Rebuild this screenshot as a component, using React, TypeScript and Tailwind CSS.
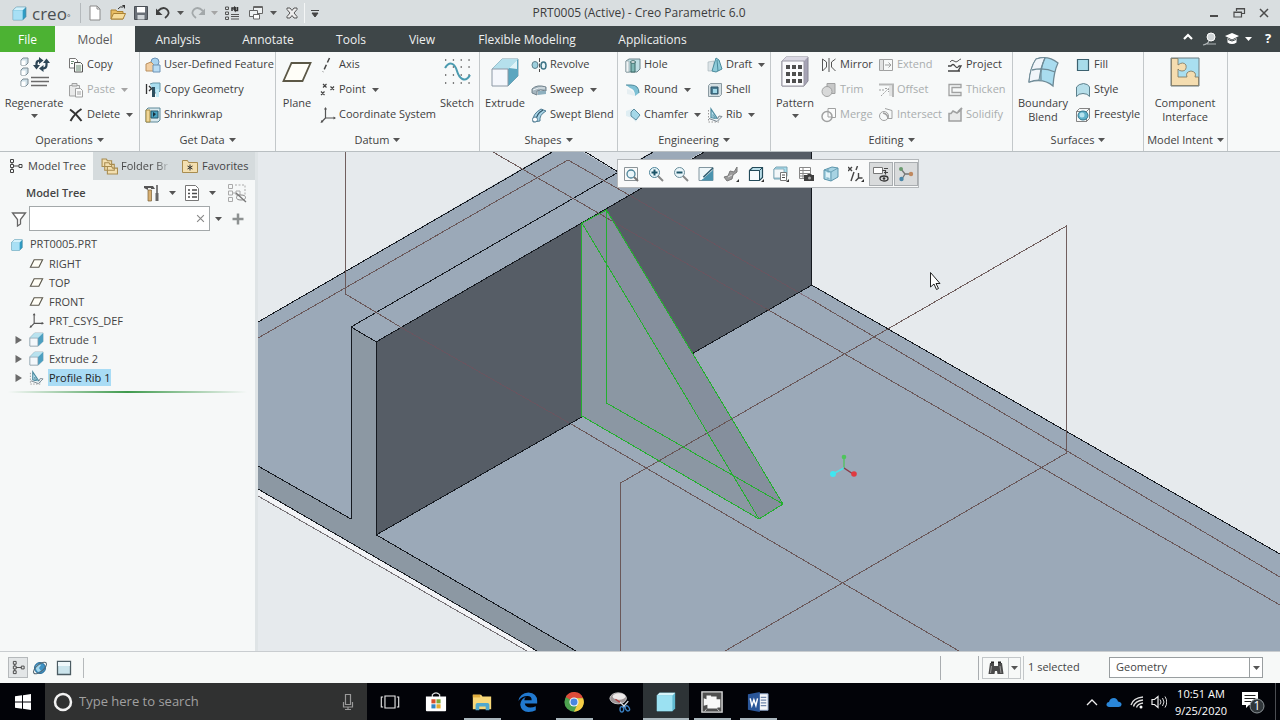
import React from 'react';
import type { ReactNode } from 'react';
import clsx from 'clsx';

type IconProps = { box?: string; className?: string; children: ReactNode };

function Icon({ box = '0 0 16 16', className = 'h-4 w-4', children }: IconProps) {
  return (
    <svg viewBox={box} className={clsx('shrink-0', className)} fill="none" stroke="#4b4b4b" strokeWidth="1" aria-hidden="true">
      {children}
    </svg>
  );
}

function Caret({ muted = false, className = '' }: { muted?: boolean; className?: string }) {
  return (
    <svg viewBox="0 0 7 4" className={clsx('h-1 w-[7px] shrink-0', className)} aria-hidden="true">
      <path d="M0 0h7L3.500 4z" fill={muted ? '#a5a5a5' : '#555'} />
    </svg>
  );
}

/* ---------- shared glyphs ---------- */

const Cube = () => (
  <>
    <path d="M2 5l3-3h9v9l-3 3H2z" fill="#2f9cc4" stroke="#3b7f9b" strokeWidth=".7" />
    <path d="M2 5h9v9H2z" fill="#a8e0f5" stroke="none" />
    <path d="M2 5l3-3h9l-3 3z" fill="#d3f1fb" stroke="none" />
  </>
);

const ExtrudeGlyph = () => (
  <>
    <path d="M1 6l5-5h9v9l-5 5H1z" fill="#7fc4dc" stroke="#7b98a6" strokeWidth=".6" />
    <path d="M9.500 6.500L15 1v9l-5.500 5z" fill="#4d9fc0" stroke="none" />
    <path d="M6 1h9L9.500 6.500H1z" fill="#b9e2ee" stroke="none" />
    <path d="M1 6.500h8.500V15H1z" fill="#f4f8fb" stroke="#8d9ba6" strokeWidth=".7" />
  </>
);

const PlaneGlyph = () => <path d="M5.500 4h9L10.500 12h-9z" stroke="#5b574b" strokeWidth="1.200" fill="#fffef6" />;

const CsysGlyph = () => (
  <>
    <path d="M5.500 1v10H15M5.500 11l-4 4" stroke="#555" strokeWidth="1.200" />
    <path d="M5.500 0l1.500 2.500H4zM16 11l-2.500 1.500v-3zM.5 16l1-3 2 2z" fill="#555" stroke="none" />
  </>
);

const RibGlyph = () => (
  <>
    <path d="M1.500 3v12h11" stroke="#999" strokeDasharray="1.500 1.500" />
    <path d="M4 2v8.500l7 2z" fill="#bfe6f2" stroke="#4b8a9f" strokeWidth="1.200" />
    <path d="M6 7.500v2.500l2.500.7z" fill="#fff" stroke="#4b8a9f" strokeWidth=".8" />
    <path d="M2 11.500l8 3 5-5-3-.5-1.500 3" stroke="#7b8790" fill="#eef4f6" />
  </>
);

const TreeGlyph = () => (
  <path d="M2.500 1.500h3v3h-3zM2.500 6.500h3v3h-3zM2.500 11.500h3v3h-3zM11 6.500h3v3h-3zM4 4.500v2M4 9.500v2M5.500 8H11" stroke="#444" />
);

/* ---------- title bar ---------- */

function TitleBar() {
  return (
    <header className="flex h-[26px] shrink-0 items-center bg-[#d9dee0] text-[#3c3c3c]">
      <div className="flex h-full flex-1 items-center">
        <Icon className="ml-[11px] h-[17px] w-[17px]">
          <Cube />
        </Icon>
        <span className="ml-1 w-[48px] text-[17px] leading-none text-[#4a4f52]">creo<span className="text-[8px]">°</span></span>
        <span className="h-5 w-px bg-[#b4b9bc]" />
        <button type="button" aria-label="New" className="ml-[6px]">
          <Icon><path d="M3 1h7l3 3v11H3z" fill="#fff" stroke="#8a8a8a" /><path d="M10 1v3h3" stroke="#8a8a8a" /></Icon>
        </button>
        <button type="button" aria-label="Open" className="ml-[7px]">
          <Icon>
            <path d="M1 14V5h5l1 1.500h6V14z" fill="#e8bd63" stroke="#a98135" />
            <path d="M1 14l2.500-5.500h12L13 14z" fill="#f6dc9a" stroke="#a98135" />
            <path d="M8 4q2-3 5-2" stroke="#333" /><path d="M12 0l3 0v4z" fill="#333" stroke="none" />
          </Icon>
        </button>
        <button type="button" aria-label="Save" className="ml-[7px]">
          <Icon>
            <path d="M1.500 1.500h13v13h-13z" fill="#6a7078" stroke="#4a4f55" />
            <path d="M4 2h8v5.500H4z" fill="#fff" stroke="none" /><path d="M4.500 10h7v4.500h-7z" fill="#cfd4d8" stroke="none" />
          </Icon>
        </button>
        <button type="button" aria-label="Undo" className="ml-[6px]">
          <Icon><path d="M3 6q5-5 9-1.500q4 4-2 8.500" stroke="#3f3f3f" strokeWidth="1.800" /><path d="M1 3.500v6.500h6.500z" fill="#3f3f3f" stroke="none" /></Icon>
        </button>
        <Caret className="ml-[6px]" />
        <button type="button" aria-label="Redo" className="ml-[6px]">
          <Icon><path d="M13 6q-5-5-9-1.500q-4 4 2 8.500" stroke="#a3a8aa" strokeWidth="1.800" /><path d="M15 3.500v6.500H8.500z" fill="#a3a8aa" stroke="none" /></Icon>
        </button>
        <Caret muted className="ml-[5px]" />
        <button type="button" aria-label="Regenerate model" className="ml-[6px]">
          <Icon>
            <path d="M1.500 2h3v2.500h-3zM1.500 7h3v2.500h-3zM1.500 12h3v2.500h-3zM7 9.500h8M7 11.500h8M7 14h8" stroke="#555" />
            <path d="M8 6V3h2.500M13.500 2v3.500H11" stroke="#333" strokeWidth="1.500" /><path d="M10 1v4l3-2zM12 4h-3l2.500 3.500z" fill="#333" stroke="none" />
          </Icon>
        </button>
        <button type="button" aria-label="Windows" className="ml-[8px]">
          <Icon>
            <path d="M5.500 1.500h9v7h-9z" fill="#eef1f2" stroke="#666" /><path d="M1.500 5.500h8v6h-8z" fill="#eef1f2" stroke="#666" />
            <path d="M5.500 9.500h6v4.500h-6z" fill="#fff" stroke="#666" /><path d="M5.500 2.500h9" stroke="#666" />
          </Icon>
        </button>
        <Caret className="ml-[6px]" />
        <button type="button" aria-label="Close window" className="ml-[7px]">
          <Icon><path d="M3 3h3l2 2.500L10 3h3v1.500L10 8l3 3.500V13h-3l-2-2.500L6 13H3v-1.500L6 8 3 4.500z" fill="#eee" stroke="#555" /></Icon>
        </button>
        <span className="ml-1 h-5 w-px bg-[#f4f6f6]" />
        <svg viewBox="0 0 8 7" className="ml-[6px] h-[7px] w-2" aria-hidden="true"><path d="M0 .5h8M1 3h6l-3 4z" fill="#444" stroke="#444" /></svg>
      </div>
      <h1 className="pl-[6px] text-[12px]">PRT0005 (Active) - Creo Parametric 6.0</h1>
      <div className="flex flex-1 items-center justify-end gap-[9px] pr-2">
        <button type="button" aria-label="Minimize"><Icon><path d="M4 11h8" strokeWidth="2" /></Icon></button>
        <button type="button" aria-label="Restore"><Icon><path d="M5.500 6V3.500h8v5H11M5.500 4h8" strokeWidth="1.200" /><path d="M3 7h7.500v5H3zM3 7.500h7.500" strokeWidth="1.200" /></Icon></button>
        <button type="button" aria-label="Close"><Icon><path d="M4 4l8 8M12 4l-8 8" strokeWidth="1.500" /></Icon></button>
      </div>
    </header>
  );
}

/* ---------- ribbon tabs ---------- */

const tabs = [
  { label: 'Analysis', width: 'w-[86px]' },
  { label: 'Annotate', width: 'w-[94px]' },
  { label: 'Tools', width: 'w-[72px]' },
  { label: 'View', width: 'w-[70px]' },
  { label: 'Flexible Modeling', width: 'w-[140px]' },
  { label: 'Applications', width: 'w-[111px]' },
];

function TabBar() {
  return (
    <nav className="flex h-[26px] shrink-0 items-stretch bg-[#3e4648] text-[12px] text-[#eef0f0]">
      <button type="button" className="w-[55px] shrink-0 bg-[#4cb233] pt-[2px] text-white">File</button>
      <button type="button" className="w-20 shrink-0 bg-[#f7f9f8] pt-[2px] text-[#5a5a5a]">Model</button>
      {tabs.map((tab) => (
        <button key={tab.label} type="button" className={clsx('shrink-0 pt-[2px] whitespace-nowrap', tab.width)}>{tab.label}</button>
      ))}
      <div className="flex flex-1 items-center justify-end gap-[6px] pr-[2px]">
        <button type="button" aria-label="Collapse ribbon"><Icon><path d="M4 8l4-4 4 4" stroke="#fff" strokeWidth="2.200" /></Icon></button>
        <button type="button" aria-label="Search">
          <Icon><circle cx="9" cy="6" r="4" fill="#cfd4d6" stroke="#fff" /><path d="M1 14q5-1 6-4M5 13h9" stroke="#aeb4b6" strokeWidth="1.200" /></Icon>
        </button>
        <button type="button" aria-label="Learning" className="flex items-center gap-[5px]">
          <Icon><path d="M8 2l7 3-7 3.500L1 5z" fill="#fff" stroke="none" /><path d="M3.500 7v4.500q4.500 3 9 0V7L8 9.500z" fill="#fff" stroke="none" /><path d="M4 8.500q4 3 8 0" stroke="#3e4648" /></Icon>
          <svg viewBox="0 0 7 4" className="h-1 w-[7px]" aria-hidden="true"><path d="M0 0h7L3.500 4z" fill="#fff" /></svg>
        </button>
        <button type="button" aria-label="Help" className="w-5 text-[13px] font-bold text-white">?</button>
      </div>
    </nav>
  );
}

/* ---------- ribbon ---------- */

type CommandProps = { label: string; icon: ReactNode; menu?: boolean; disabled?: boolean };

function Command({ label, icon, menu, disabled }: CommandProps) {
  return (
    <button type="button" disabled={disabled} className={clsx('flex h-[25px] items-center gap-[3px] whitespace-nowrap', disabled && 'text-[#a9adae]')}>
      <Icon className={clsx('h-4 w-4', disabled && 'opacity-50 grayscale')}>{icon}</Icon>
      <span>{label}</span>
      {menu && <Caret muted={disabled} className="ml-[3px]" />}
    </button>
  );
}

function BigCommand({ lines, icon, menu, width }: { lines: string[]; icon: ReactNode; menu?: boolean; width: string }) {
  return (
    <button type="button" className={clsx('flex h-[75px] shrink-0 flex-col items-center pt-1 leading-[14px]', width)}>
      <Icon box="0 0 32 32" className="h-8 w-8">{icon}</Icon>
      <span className="flex flex-col pt-2 whitespace-nowrap">
        {lines.map((line) => <span key={line}>{line}</span>)}
      </span>
      {menu && <Caret className="mt-1" />}
    </button>
  );
}

function Group({ title, width, children }: { title: string; width: string; children: ReactNode }) {
  return (
    <section className={clsx('flex shrink-0 flex-col border-r border-[#c3c8ca]', width)}>
      <div className="flex h-[75px]">{children}</div>
      <button type="button" className="flex h-[23px] items-center justify-center gap-1 pt-[3px]">
        {title}
        <Caret />
      </button>
    </section>
  );
}

function Ribbon() {
  return (
    <div className="flex h-[100px] shrink-0 overflow-hidden border-b border-[#b9bfc2] bg-[#f7f9f9] text-[11px] text-[#3f3f3f]">
      <Group title="Operations" width="w-[140px]">
        <BigCommand
          lines={['Regenerate']}
          menu
          width="w-[68px]"
          icon={
            <>
              <path d="M3 4l2-2h5v5l-2 2H3zM3 14l2-2h5v5l-2 2H3zM3 25l2-2h5v5l-2 2H3z" fill="#cfe0e8" stroke="#7c8b93" />
              <path d="M3.500 4.500h4V9h-4zM3.500 14.500h4V19h-4zM3.500 25.500h4V30h-4z" fill="#fff" stroke="none" />
              <path d="M13 21.500h18M13 25.500h18M13 29.500h16" stroke="#6b6b6b" strokeWidth="1.300" />
              <path d="M18.500 10V7.500q0-3 3.500-3M28.500 6v3q0 3.500-4 3.500" stroke="#2d4656" strokeWidth="2.200" />
              <path d="M21 1v7l4.500-3.500zM25.500 9v7L21 12.500zM15 9h7l-3.500 4.500zM25 7h7l-3.500-4.500z" fill="#2d4656" stroke="none" />
            </>
          }
        />
        <div>
          <Command label="Copy" icon={<><path d="M1.500 1.500h6l2 2V11h-8z" fill="#fff" stroke="#777" /><path d="M6.500 5.500h6l2 2V15h-8z" fill="#f4f8f4" stroke="#555" /><path d="M3 4.500h3M3 6.500h2M8 9h5M8 11h5M8 13h5" stroke="#6b8b74" /></>} />
          <Command label="Paste" menu disabled icon={<><path d="M1.500 3.500h10V14h-10z" fill="#ddd" /><path d="M4 1.500h5V4H4z" fill="#ccc" /><path d="M7.500 6.500h5l2 2V15h-7z" fill="#fff" /><path d="M9 10h4M9 12h4" /></>} />
          <Command label="Delete" menu icon={<path d="M2 2.500q6 4 11.500 11.500M13.500 2Q7 6 2.500 14" stroke="#333" strokeWidth="2" />} />
        </div>
      </Group>

      <Group title="Get Data" width="w-[136px]">
        <div className="pl-[5px]">
          <Command label="User-Defined Feature" icon={<><circle cx="10" cy="5" r="4" fill="#a9d3ee" stroke="#6c93b5" /><path d="M1 7l5-2 3 3v6H1z" fill="#f2cfa3" stroke="#b98f5e" /><path d="M8 8h7v7H8z" fill="#b9dcf3" stroke="#6c93b5" /></>} />
          <Command label="Copy Geometry" icon={<><path d="M1.500 2v10M4 4l5 5M9 4L4 9" stroke="#333" strokeWidth="1.300" /><path d="M5 2l3-1h7v8l-2 2H9" fill="#a9def0" stroke="#6797a8" /><path d="M7 5h3v10H7z" fill="#2d4f5f" stroke="none" /><path d="M11 7h3v8h-3z" fill="#bfe9f5" stroke="none" /></>} />
          <Command label="Shrinkwrap" icon={<><path d="M1 3l2-2h12v12l-2 2H1z" fill="#d9e9ee" stroke="#5c8898" /><path d="M1 3h4v12H1z" fill="#f0d796" stroke="#a58a45" /><path d="M6 4h7v7H6z" fill="#4aa3c2" stroke="#24566b" /><path d="M8 5l3 2-3 3z" fill="#18303c" stroke="none" /></>} />
        </div>
      </Group>

      <Group title="Datum" width="w-[204px]">
        <BigCommand lines={['Plane']} width="w-[42px]" icon={<path d="M10.500 7h19l-8 18h-19z" fill="#fffef8" stroke="#5c5846" strokeWidth="1.800" />} />
        <div className="w-[118px] pl-[2px]">
          <Command label="Axis" icon={<path d="M9.500 1L3 15" stroke="#444" strokeWidth="1.500" strokeDasharray="5 2.500" />} />
          <Command label="Point" menu icon={<path d="M3 2l3.500 3.500M6.500 2L3 5.500M10.500 4.500L14 8M14 4.500L10.500 8M1 9.500L4.500 13M4.500 9.500L1 13" stroke="#444" strokeWidth="1.200" />} />
          <Command label="Coordinate System" icon={<CsysGlyph />} />
        </div>
        <BigCommand
          lines={['Sketch']}
          width="w-[42px]"
          icon={
            <>
              <path d="M4 4h25M4 11h25M4 19h25M4 27h25" stroke="#555" strokeWidth="1.300" strokeDasharray="1.300 6.500" />
              <path d="M4 12C9 4 14 8 16 15S24 28 29 19" stroke="#4a9bb0" strokeWidth="2" />
            </>
          }
        />
      </Group>

      <Group title="Shapes" width="w-[138px]">
        <BigCommand
          lines={['Extrude']}
          width="w-[50px]"
          icon={
            <>
              <path d="M3 13L13 3h16v17L19 30V13z" fill="#8accdf" stroke="#7fa0ad" />
              <path d="M19 13L29 3v17L19 30z" fill="#5ca6bf" stroke="none" />
              <path d="M13 3h16L19 13H3z" fill="#b5e0ec" stroke="none" />
              <path d="M20 12l8-8v9z" fill="#dff3f8" stroke="none" />
              <path d="M3 13h16v17H3z" fill="#f5f7fc" stroke="#8c98a5" />
            </>
          }
        />
        <div className="pl-px">
          <Command label="Revolve" icon={<><path d="M8.500 1v14" strokeDasharray="4 1.500" /><ellipse cx="4" cy="8" rx="3" ry="3.500" fill="#9ed0de" stroke="#5d808c" /><ellipse cx="12.500" cy="8.500" rx="2.500" ry="3.500" fill="#e8f4f7" stroke="#3d7486" strokeWidth="1.500" /></>} />
          <Command label="Sweep" menu icon={<><path d="M1 7q5-5 14-2v4Q9 7 6 9v4l-5-2z" fill="#a6b6bf" stroke="#71828c" /><path d="M2 8q5-3 12-2" stroke="#eef4f6" /><path d="M7 9h8v3l-8 1z" fill="#8eb0bf" stroke="none" /></>} />
          <Command label="Swept Blend" icon={<><path d="M2 15q-1-8 8-13l5 2q-7 4-6 10z" fill="#a8d4e6" stroke="#4f7c93" /><path d="M5 14q0-7 7-11" stroke="#2e556a" strokeWidth="1.300" /><ellipse cx="4" cy="12.500" rx="2.500" ry="2.500" fill="#fff" stroke="#4f7c93" /></>} />
        </div>
      </Group>

      <Group title="Engineering" width="w-[153px]">
        <div className="w-[82px] pl-[7px]">
          <Command label="Hole" icon={<><path d="M1 4l3-2h11v10l-3 3H1z" fill="#bfdfe4" stroke="#6d858c" /><path d="M1 4h3v11H1z" fill="#eff4f5" stroke="#8ca0a6" strokeWidth=".7" /><path d="M6 15V5h4v10z" fill="#7fb7b5" stroke="#3c6a69" /><ellipse cx="8" cy="5" rx="2.500" ry="1.300" fill="#fff" stroke="#3c6a69" /></>} />
          <Command label="Round" menu icon={<><path d="M1 3h5q8 0 8 8l-4 3Q10 7 5 6z" fill="#7fc1d5" stroke="none" /><path d="M1 3h5q8 0 8 8" stroke="#4f8b9d" /><path d="M2 7q7 1 8 7l-8-2z" fill="#e6eff2" stroke="none" /></>} />
          <Command label="Chamfer" menu icon={<><path d="M1 4l6-2 7 6-3 7-4-4-6-2z" fill="#dfeef3" stroke="none" /><path d="M6 5l3-3 6 6-4 5-5-4z" fill="#a5d8e8" stroke="#5c8da0" /></>} />
        </div>
        <div className="pl-[7px]">
          <Command label="Draft" menu icon={<><path d="M1 5l6-1v10H1z" fill="#dce4e7" stroke="#a3b0b5" strokeWidth=".6" /><path d="M5 14L9 1l3 2 3 9-6 3z" fill="#8fcbd9" stroke="#4b8b9c" /><path d="M10 3l1 11" stroke="#4b8b9c" /></>} />
          <Command label="Shell" icon={<><path d="M1.500 3.500l2-2h11v11l-2 2h-11z" fill="#d4dfe3" stroke="#8b9aa1" /><path d="M4 5h7v7H4z" fill="#4a7c92" stroke="#2f5568" /><path d="M6 7h4v4H6z" fill="#a1d8e8" stroke="none" /></>} />
          <Command label="Rib" menu icon={<RibGlyph />} />
        </div>
      </Group>

      <Group title="Editing" width="w-[242px]">
        <BigCommand
          lines={['Pattern']}
          menu
          width="w-[48px]"
          icon={
            <>
              <path d="M3 5l4-4h22v24l-4 5H3z" fill="#a6a3b5" stroke="#8a8896" />
              <path d="M3 5l4-4h22l-4 4z" fill="#d9d7e2" stroke="none" />
              <path d="M3 5h22v25H3z" fill="#fbfbfd" stroke="#9b9aa5" />
              <path d="M7 9h4v4H7zM13 9h4v4h-4zM19 9h4v4h-4zM7 16h4v4H7zM13 16h4v4h-4zM19 16h4v4h-4zM7 23h4v4H7zM13 23h4v4h-4zM19 23h4v4h-4z" fill="#4f4f4f" stroke="none" />
            </>
          }
        />
        <div className="w-[59px] pl-[2px]">
          <Command label="Mirror" icon={<path d="M1.500 2l4 3v5l-4 4zM8 1v14M14.500 2l-4 3v5l4 4" stroke="#555" />} />
          <Command label="Trim" disabled icon={<><path d="M6 1.500h8v10H6z" fill="#999" /><circle cx="6" cy="9.500" r="5" fill="#bbb" /></>} />
          <Command label="Merge" disabled icon={<><path d="M7 1.500h7.500v9H7z" fill="#fff" /><circle cx="6" cy="9.500" r="5" fill="#fff" strokeWidth="1.500" /><path d="M7 5v5h4" /></>} />
        </div>
        <div className="w-[69px]">
          <Command label="Extend" disabled icon={<><path d="M1.500 2.500h4v11h-4z" fill="#ccc" /><path d="M5.500 2.500h9v11h-9zM7 8h6M10.500 5.500L13 8l-2.500 2.500" /></>} />
          <Command label="Offset" disabled icon={<><path d="M1 2.500h14V15" strokeWidth="2" stroke="#777" /><path d="M1 8h6M3 14l7-7M7 6.500h3.500V10" strokeDasharray="2 1" /><path d="M11 4h3v10h-3z" fill="#ccc" stroke="none" /></>} />
          <Command label="Intersect" disabled icon={<><path d="M7 1.500l7 2v8h-5" /><circle cx="6" cy="9" r="4.500" /><path d="M5 6q5 1 5 6" strokeWidth="1.600" /></>} />
        </div>
        <div>
          <Command label="Project" icon={<><path d="M3 5q2-3 4-1t4 0 3-2" stroke="#555" /><path d="M1 9h3q2-3 4 0t4 0h2l-3 5H2M1 14h12" stroke="#444" strokeWidth="1.300" /></>} />
          <Command label="Thicken" disabled icon={<path d="M14 2.500H2v11h12v-3H5v-5h9z" strokeWidth="1.300" />} />
          <Command label="Solidify" disabled icon={<><path d="M2 6.500h2L6 4l4 2 4-3.500V14H2z" fill="#ddd" strokeWidth="1.500" /><path d="M11 5l4-4" strokeWidth="2" /></>} />
        </div>
      </Group>

      <Group title="Surfaces" width="w-[131px]">
        <BigCommand
          lines={['Boundary', 'Blend']}
          width="w-[60px]"
          icon={
            <>
              <path d="M2 26Q3 12 9 3q12-4 22 4-4 8-5 23-9-8-24-4z" fill="#a9dcef" stroke="#6e8a96" strokeWidth="1.300" />
              <path d="M2 26Q3 12 9 3q5-1.500 9-1.500Q13 12 12 24q-5 0-10 2z" fill="#f1f5fa" stroke="#6e8a96" />
              <path d="M18 2q-5 10-4 22M5 14q12-3 23 2" stroke="#6e8a96" strokeWidth="1.300" />
            </>
          }
        />
        <div className="pl-[2px]">
          <Command label="Fill" icon={<path d="M2.500 2.500h11v11h-11z" fill="#a8dcea" stroke="#3c6270" strokeWidth="1.200" />} />
          <Command label="Style" icon={<path d="M1.500 14.500V5q2-3 7-3.500 5 .5 6 3.500v9.500q-2-3-6.500-3t-6.500 3z" fill="#b7dfea" stroke="#5d808c" />} />
          <Command label="Freestyle" icon={<><path d="M1.500 4.500l3-3h10v10l-3 3h-10zM1.500 4.500h10v10M11.500 4.500l3-3" stroke="#666" strokeWidth=".8" /><ellipse cx="8" cy="8.500" rx="5" ry="4.500" fill="#5fb1ca" stroke="#32788f" /><ellipse cx="7" cy="8" rx="2.500" ry="2.500" fill="#b5e3ef" stroke="none" /></>} />
        </div>
      </Group>

      <Group title="Model Intent" width="w-[84px]">
        <BigCommand
          lines={['Component', 'Interface']}
          width="w-[82px]"
          icon={
            <>
              <path d="M2 2h28v28H2z" fill="#a9dff0" stroke="#6d7c80" />
              <path d="M2.500 2.500H9V9q5-4 8 0 1 6-4 6-3 0-4-2v8h9q-2-5 4-6 6 1 4 6h3.500v8.500h-27z" fill="#f4ddb0" stroke="#7c745c" strokeWidth=".8" />
            </>
          }
        />
      </Group>
    </div>
  );
}

/* ---------- model tree ---------- */

type Node = { label: string; glyph: 'part' | 'plane' | 'csys' | 'extrude' | 'rib'; expandable?: boolean; selected?: boolean };

const nodes: Node[] = [
  { label: 'RIGHT', glyph: 'plane' },
  { label: 'TOP', glyph: 'plane' },
  { label: 'FRONT', glyph: 'plane' },
  { label: 'PRT_CSYS_DEF', glyph: 'csys' },
  { label: 'Extrude 1', glyph: 'extrude', expandable: true },
  { label: 'Extrude 2', glyph: 'extrude', expandable: true },
  { label: 'Profile Rib 1', glyph: 'rib', expandable: true, selected: true },
];

const glyphs = {
  part: <Cube />,
  plane: <PlaneGlyph />,
  csys: <CsysGlyph />,
  extrude: <ExtrudeGlyph />,
  rib: <RibGlyph />,
};

function Sidebar() {
  return (
    <aside className="flex w-[258px] shrink-0 flex-col border-r-[3px] border-[#dfe4e6] bg-[#f6f8f8] text-[11px] text-[#444]">
      <div className="flex h-7 shrink-0 items-stretch bg-[#d5dbdd]">
        <button type="button" className="flex w-[93px] shrink-0 items-center gap-1 bg-[#f6f8f8] pl-2 whitespace-nowrap">
          <Icon><TreeGlyph /></Icon>
          Model Tree
        </button>
        <button type="button" className="flex w-[83px] shrink-0 items-center gap-[3px] pl-2 whitespace-nowrap">
          <Icon className="h-[17px] w-[17px]">
            <path d="M1 1h4l1 1.500h4V8H1zM3.500 4.500h4l1 1.500h4v5.500h-9zM6 8h4l1 1.500h4.500V15H6z" fill="#f3dfb0" stroke="#a88c50" />
          </Icon>
          <span className="bg-linear-to-r from-[#444] from-75% to-[#bcc1c3] bg-clip-text text-transparent">Folder Br</span>
        </button>
        <button type="button" className="flex items-center gap-1 pl-[6px] whitespace-nowrap">
          <Icon>
            <path d="M.5 14.500V2.500h5l1 2h9v10z" fill="#f3dfb0" stroke="#a88c50" />
            <path d="M8 6.500v6M5.500 8l5 3M10.500 8l-5 3" stroke="#333" />
          </Icon>
          Favorites
        </button>
      </div>

      <div className="flex h-[26px] shrink-0 items-center pl-[26px]">
        <h2 className="w-[117px] font-semibold">Model Tree</h2>
        <button type="button" aria-label="Settings" className="flex items-center gap-2">
          <Icon box="0 0 18 18" className="h-[18px] w-[18px]">
            <path d="M1 2h9l2 3H8V4H5v2L1 4z" fill="#555" stroke="none" /><path d="M5 6h3.500v11H5z" fill="#d8b072" stroke="#7a6033" strokeWidth=".7" />
            <path d="M14 1v8" stroke="#555" strokeWidth="1.500" /><path d="M12.500 9h3v8h-3z" fill="#666" stroke="none" />
          </Icon>
          <Caret />
        </button>
        <button type="button" aria-label="Show" className="ml-[7px] flex items-center gap-2">
          <Icon box="0 0 18 18" className="h-[18px] w-[18px]">
            <path d="M2.500 1.500h10l3 3v12h-13z" fill="#fff" stroke="#777" /><path d="M5 6h2M5 9.500h2M5 13h2M9 6h5M9 9.500h5M9 13h5" strokeWidth="1.300" />
          </Icon>
          <Caret />
        </button>
        <button type="button" aria-label="Hide tree columns" className="ml-[11px]">
          <Icon box="0 0 20 20" className="h-5 w-5">
            <path d="M1.500 1.500h4v4h-4zM1.500 8h4v4h-4zM1.500 14.500h4v4h-4zM9 8h4v4H9zM5.500 10H9" stroke="#aaa" />
            <path d="M8 2h10v10" stroke="#aaa" strokeDasharray="2 1.500" /><ellipse cx="14" cy="14.500" rx="4.500" ry="2.500" stroke="#888" /><path d="M9 10l10 9" stroke="#777" strokeWidth="1.300" />
          </Icon>
        </button>
      </div>

      <div className="flex h-[25px] shrink-0 items-center pl-[11px]">
        <Icon><path d="M1.500 2h13L9.500 8.500V13l-3 2V8.500z" fill="#fff" stroke="#666" strokeWidth="1.300" /></Icon>
        <div className="ml-[2px] flex h-[25px] w-[181px] items-center border border-[#a3a8aa] bg-white pr-1">
          <input type="text" aria-label="Filter tree" className="h-full min-w-0 flex-1 bg-transparent px-1 outline-none" />
          <button type="button" aria-label="Clear filter"><Icon className="h-[9px] w-[9px]"><path d="M2 2l12 12M14 2L2 14" stroke="#888" strokeWidth="2" /></Icon></button>
        </div>
        <Caret className="ml-[5px]" />
        <button type="button" aria-label="Add filter" className="ml-2"><Icon className="h-4 w-4"><path d="M8 2.500v11M2.500 8h11" stroke="#8d9191" strokeWidth="2.500" /></Icon></button>
      </div>

      <ul className="mt-1">
        <li className="flex h-[19px] items-center gap-[6px] pl-[10px]">
          <Icon className="h-[14px] w-[14px]">{glyphs.part}</Icon>
          PRT0005.PRT
        </li>
        {nodes.map((node) => (
          <li key={node.label} className="flex h-[19px] items-center pl-[15px]">
            <span className="flex w-[14px]">
              {node.expandable && <svg viewBox="0 0 7 8" className="h-2 w-[7px]" aria-hidden="true"><path d="M.5 0v8L7 4z" fill="#6b6b6b" /></svg>}
            </span>
            <Icon className="h-[15px] w-[15px]">{glyphs[node.glyph]}</Icon>
            <span className={clsx('ml-1 px-px leading-[17px]', node.selected && 'bg-[#a9dcf5] text-[#222]')}>{node.label}</span>
          </li>
        ))}
      </ul>
      <div className="mx-2 mt-1 h-[2px] bg-linear-to-r from-transparent via-[#3f9a4d] to-transparent" />
    </aside>
  );
}

/* ---------- graphics area ---------- */

const viewTools: { label: string; pressed?: boolean; icon: ReactNode }[] = [
  { label: 'Refit', icon: <><path d="M1.500 1.500h13v13h-13z" stroke="#8c9498" /><circle cx="8" cy="8" r="4" fill="#eaf6fa" stroke="#4d8499" strokeWidth="1.300" /><path d="M11 11l4 4" stroke="#777" strokeWidth="2" /></> },
  { label: 'Zoom In', icon: <><circle cx="6.500" cy="6.500" r="5" fill="#eaf6fa" stroke="#4d8499" /><path d="M6.500 3.500v6M3.500 6.500h6" stroke="#1d5468" strokeWidth="2" /><path d="M10 10l5 5" stroke="#888" strokeWidth="2" /></> },
  { label: 'Zoom Out', icon: <><circle cx="6.500" cy="6.500" r="5" fill="#eaf6fa" stroke="#6b8d9a" /><path d="M3.500 6.500h6" stroke="#1d5468" strokeWidth="2" /><path d="M10 10l5 5" stroke="#888" strokeWidth="2" /></> },
  { label: 'Repaint', icon: <><path d="M1 1.500h14v13H1z" fill="#eef6f9" stroke="#8296a0" /><path d="M3 14.500L15 4v10.500z" fill="#4b93ae" stroke="none" /><path d="M5 11.500L15 2" stroke="#2e5b6e" strokeWidth="1.500" /><path d="M2 14l2-4 2 2z" fill="#fff" stroke="none" /></> },
  { label: 'Rendering Options', icon: <><path d="M1 11l4-1 2-5 4 1 3-5v5l-4 3-1 4-5 2z" fill="#9c9c9c" stroke="#7a7a7a" /><path d="M5 11l4-2" stroke="#ddd" /><path d="M16 13v3h-3z" fill="#333" stroke="none" /></> },
  { label: 'Display Style', icon: <><path d="M1.500 4.500l3-3h10v10l-3 3h-10z" fill="#b9dde8" stroke="#234a59" strokeWidth="1.200" /><path d="M1.500 4.500h10v10h-10z" fill="#f7fbfc" stroke="#234a59" /><path d="M11.500 4.500l3-3" stroke="#234a59" /><path d="M16 13v3h-3z" fill="#333" stroke="none" /></> },
  { label: 'Saved Orientations', icon: <><path d="M1 3l2-2h11v9l-2 3H1z" fill="#a9dcec" stroke="#7ba4b4" /><path d="M1 3h10v9H1z" fill="#f2f6f8" stroke="#7ba4b4" strokeWidth=".8" /><path d="M7.500 6.500h6v8h-6z" fill="#fff" stroke="#777" /><path d="M9 9h3M9 11.500h3" /><path d="M16 13v3h-3z" fill="#333" stroke="none" /></> },
  { label: 'View Manager', icon: <><path d="M1.500 1.500h11v11h-11z" fill="#fff" stroke="#888" /><path d="M1.500 4.500h11M1.500 7.500h11M1.500 10h6M5 1.500v11" stroke="#888" /><path d="M6 9h3l1-1h3l1 1h2v6H6z" fill="#3f3f3f" stroke="none" /><circle cx="11.500" cy="12" r="1.500" fill="#aaa" stroke="none" /></> },
  { label: 'Perspective View', icon: <><path d="M1 4l8-3 6 1v9l-7 4-7-2z" fill="#a7d3e3" stroke="#5c95ab" /><path d="M1 4l7 2 7-4M8 6v9M5 3v10" stroke="#5c95ab" strokeWidth=".8" /><path d="M3 6l4 1v5l-4-1z" fill="#dff2f8" stroke="none" /></> },
  { label: 'Datum Display Filters', icon: <><path d="M0 1l4 4M4 1L0 5M9.500 0L8 4M6 6l-3 9M10.500 7v5h4M10.500 12l-3 3" stroke="#444" strokeWidth="1.400" /><path d="M16 13v3h-3z" fill="#333" stroke="none" /></> },
  { label: 'Annotation Display', pressed: true, icon: <><path d="M.5 1.500h9v6h-9z" fill="#fff" stroke="#777" /><path d="M9.500 4.500h3v4M11 2.500h4M11 6.500h4" stroke="#444" strokeWidth="1.200" /><ellipse cx="11" cy="12.500" rx="4" ry="2.500" stroke="#333" strokeWidth="1.300" /><circle cx="11" cy="12.500" r="1.300" fill="#333" stroke="none" /></> },
  { label: 'Spin Center', pressed: true, icon: <><path d="M3 3l4 5h6M7 8l-3 5" stroke="#777" strokeWidth="1.300" /><circle cx="3" cy="3" r="2" fill="#6a9a6e" stroke="none" /><circle cx="13" cy="8" r="2.200" fill="#c0895f" stroke="none" /><circle cx="3.500" cy="13" r="2.200" fill="#4a86a8" stroke="none" /></> },
];

function Model() {
  return (
    <svg viewBox="258 152 1022 499" preserveAspectRatio="xMidYMid slice" className="h-full w-full" role="img" aria-label="Part with profile rib">
      <rect x="258" y="152" width="1022" height="499" fill="#e6eaed" />
      {/* base plate */}
      <path d="M258 322L554 150H580L617 172L812 285L1280 554V651H576L376 535L258 466z" fill="#9ba9b8" />
      <path d="M258 466L351 519V327L376 342V535L576 651H537L258 489z" fill="#8c98a3" />
      {/* wall */}
      <path d="M351 327L618 172L655 150H706L581 223L376 342z" fill="#9ba9b8" />
      <path d="M376 342L581 223L706 151H812V285L376 535z" fill="#565d66" />
      <g fill="none" stroke="#75505c" strokeWidth="1" opacity=".6" shapeRendering="crispEdges">
        <path d="M402 328L571 424M629 195L812 300M612 221L765 308" />
      </g>
      <g fill="none" stroke="#15191f" strokeWidth="1" shapeRendering="crispEdges">
        <path d="M258 322L554 151M584 151L618 172M376 342L706 151M351 327L655 151" />
        <path d="M351 519V327L376.500 342V535L576 651M351 519L258 466M258 489L537 651M376 535L812 285M811.500 152V285L1280 554" />
      </g>
      <path d="M258 492.500L532 651" stroke="#f3f4f7" strokeWidth="4" />
      <path d="M258 496L527 651" stroke="#777276" strokeWidth="1" shapeRendering="crispEdges" />
      {/* rib */}
      <path d="M582 223L759 519L582 416z" fill="#8b97a3" />
      <path d="M582 223L606 210L783 504L759 519z" fill="#858f9d" />
      {/* datum planes */}
      <g fill="none" stroke="#65504f" strokeWidth="1" opacity=".9" shapeRendering="crispEdges">
        <path d="M345.500 152V294L402 328M571 424L959 651" />
        <path d="M258 338L568 160L629 195M812 300L1280 577" />
        <path d="M493 152L612 221M765 308L1280 605" />
        <path d="M620.500 651V483L1066.500 226V453L725 651" />
      </g>
      <g fill="none" stroke="#23b02e" strokeWidth="1" shapeRendering="crispEdges">
        <path d="M582 223L606.500 210L783 504L759 519L582 416" />
        <path d="M606.500 210V403L783 504M582 223L759 519" />
      </g>
      <rect x="581" y="223" width="1" height="194" fill="#23b02e" />
      {/* spin center */}
      <path d="M844 468V458" stroke="#59c06a" strokeWidth="1.500" />
      <path d="M844 468L833 474" stroke="#52dfe6" strokeWidth="1.500" />
      <path d="M844 468L853 474" stroke="#8b3a48" strokeWidth="1.500" />
      <circle cx="844" cy="457" r="2.300" fill="#4fc45c" />
      <circle cx="833" cy="474" r="3" fill="#3fe6f0" />
      <circle cx="854" cy="474" r="2.800" fill="#e03a40" />
      {/* pointer */}
      <path d="M930.500 272.500V287L934 284L936.500 289.500L938.500 288.500L936 283.500H940z" fill="#fff" stroke="#222" strokeWidth="1" />
    </svg>
  );
}

function Viewport() {
  return (
    <main className="relative min-w-0 flex-1 overflow-hidden">
      <div className="absolute inset-0">
        <Model />
      </div>
      <div className="absolute top-[7px] left-[359px] flex h-[29px] items-center gap-px border border-[#b3b7ba] bg-[#f9fafa] pl-px">
        {viewTools.map((tool) => (
          <button
            key={tool.label}
            type="button"
            aria-label={tool.label}
            className={clsx('flex h-6 w-6 items-center justify-center border', tool.pressed ? 'border-[#a9adb0] bg-[#d9dbdc]' : 'border-transparent')}
          >
            <Icon className="h-4 w-4">{tool.icon}</Icon>
          </button>
        ))}
      </div>
    </main>
  );
}

/* ---------- status bar ---------- */

function StatusBar() {
  return (
    <div className="flex h-8 shrink-0 items-center border-t border-[#c9cdd0] bg-[#f7f9f8] text-[11px] text-[#444]">
      <button type="button" aria-label="Model tree" className="ml-2 flex h-[21px] w-5 items-center justify-center border border-[#b5b9bb] bg-[#e3e6e7]">
        <Icon className="h-[15px] w-[15px]"><TreeGlyph /></Icon>
      </button>
      <button type="button" aria-label="Web browser" className="ml-1">
        <Icon><circle cx="8" cy="8" r="5.500" fill="#3f93c5" stroke="#2b6d98" /><path d="M4 6q3-3 5-1l-2 3 2 3-3 1q-3-3-2-6z" fill="#a5d9ef" stroke="none" /><ellipse cx="8" cy="8" rx="8" ry="3.500" transform="rotate(-40 8 8)" stroke="#556873" /></Icon>
      </button>
      <button type="button" aria-label="Full screen" className="ml-2">
        <Icon><path d="M1.500 1.500h13v13h-13z" fill="#cbe4ec" stroke="#4c5c63" strokeWidth="1.300" /><path d="M2 2h12v4H2z" fill="#eef7fa" stroke="none" /></Icon>
      </button>
      <span className="ml-[11px] h-5 w-px bg-[#b5b9bb]" />
      <div className="ml-auto flex h-full items-center">
        <span className="h-6 w-px bg-[#a9adb0]" />
        <span className="ml-[37px] h-6 w-px bg-[#a9adb0]" />
        <button type="button" aria-label="Find" className="ml-[3px] flex h-[22px] items-center border border-[#c3c7c9]">
          <span className="flex w-[25px] justify-center">
            <Icon><path d="M2 3h4v3h4V3h4l1.500 11H9.500l-.5-3H7l-.5 3H.5z" fill="#4a4a4a" stroke="none" /><path d="M3 1.500h3V3H3zM10 1.500h3V3h-3z" fill="#222" stroke="none" /><path d="M3.500 6L2.500 13M12 6l1 7" stroke="#999" /></Icon>
          </span>
          <span className="flex h-full w-3 items-center justify-center border-l border-[#c3c7c9]"><Caret /></span>
        </button>
        <span className="ml-[2px] h-6 w-px bg-[#c3c7c9]" />
        <span className="ml-1 w-[81px]">1 selected</span>
        <div className="relative mr-[17px] flex items-center">
          <select aria-label="Selection filter" className="h-[21px] w-[154px] appearance-none border border-[#999ea0] bg-white pl-[6px] text-[11px] outline-none" defaultValue="Geometry">
            <option>Geometry</option>
          </select>
          <span className="pointer-events-none absolute inset-y-0 right-0 flex w-[14px] items-center justify-center border-l border-[#999ea0]"><Caret /></span>
        </div>
      </div>
    </div>
  );
}

/* ---------- taskbar ---------- */

const apps: { label: string; state?: 'open' | 'active'; icon: ReactNode }[] = [
  { label: 'Task View', icon: <path d="M6.500 5.500h11v13h-11zM4.500 6.500H2.500v11h2M19.500 6.500h2v11h-2" stroke="#eee" strokeWidth="1.200" /> },
  { label: 'Microsoft Store', icon: <><path d="M8 7V4q4-4 8 0v3" stroke="#ddd" strokeWidth="1.300" /><path d="M1 6h22v15q0 1-1 1H2q-1 0-1-1z" fill="#fff" stroke="none" /><path d="M7 9h4.500v4.500H7z" fill="#d9512c" stroke="none" /><path d="M12.500 9H17v4.500h-4.500z" fill="#7fa838" stroke="none" /><path d="M7 14.500h4.500V19H7z" fill="#3386c4" stroke="none" /><path d="M12.500 14.500H17V19h-4.500z" fill="#e6ac2f" stroke="none" /></> },
  { label: 'File Explorer', state: 'open', icon: <><path d="M2 4h9l1.500 2H22v14H2z" fill="#f7d778" stroke="none" /><path d="M2 4h8v3H2z" fill="#e1ad3e" stroke="none" /><path d="M5 21v-6q0-2 2-2h11q2 0 2 2v6h-4v-4H9v4z" fill="#4fa8cd" stroke="none" /></> },
  { label: 'Microsoft Edge', icon: <path d="M1.500 11Q3 2 12.500 1.500 22 2 22 11v2.500H8.500q.5 4 6 4.500 3 0 6-1.500V21q-3 2-8 2-8-.5-9-8Q4 9 9.500 6.500 8 8 8 10h8q0-4.500-4.500-4.500Q5 5.500 1.500 11z" fill="#2179cf" stroke="none" /> },
  { label: 'Google Chrome', state: 'open', icon: <><circle cx="12" cy="12" r="10.500" fill="#4ca14e" stroke="none" /><path d="M12 12L3 6.500A10.500 10.500 0 0 1 22 8H12z" fill="#dd4b3a" stroke="none" /><path d="M12 8h10a10.500 10.500 0 0 1-10 14.500L16 14z" fill="#f6cd45" stroke="none" /><circle cx="12" cy="12" r="5" fill="#f3f6fa" stroke="none" /><circle cx="12" cy="12" r="3.800" fill="#4a86df" stroke="none" /></> },
  { label: 'Snipping Tool', icon: <><ellipse cx="10" cy="8" rx="9" ry="6" fill="#9d9496" stroke="#ccc" /><ellipse cx="11" cy="6" rx="7" ry="3.500" fill="#ece8e8" stroke="none" /><path d="M7 9l6 4" stroke="#b33c3c" strokeWidth="1.500" /><path d="M12 12l6 6M21 11l-6 7" stroke="#d5dde4" strokeWidth="1.500" /><ellipse cx="14" cy="20" rx="2" ry="3" stroke="#3a7fc0" strokeWidth="1.500" /><ellipse cx="20" cy="19" rx="2" ry="3" transform="rotate(-35 20 19)" stroke="#3a7fc0" strokeWidth="1.500" /></> },
  { label: 'Creo Parametric', state: 'active', icon: <><path d="M2 5l3-3h17v17l-3 3H2z" fill="#5fb8cf" stroke="none" /><path d="M2 5l3-3h17l-3 3z" fill="#d7f4fa" stroke="none" /><path d="M2 5h17v17H2z" fill="#9be1f2" stroke="none" /></> },
  { label: 'Recorder', state: 'open', icon: <><path d="M1 1h22v22H1z" fill="#4f4f4f" stroke="#ddd" strokeWidth="1.500" /><path d="M3 8l3 1V5h5v1h6v3h4v9h-3v1H7v-4l-4 1z" fill="#f7f7f7" stroke="none" /><path d="M6 20l-2 2M18 20l2 2" stroke="#ddd" /></> },
  { label: 'Word', state: 'open', icon: <><path d="M12 3h11v18H12z" fill="#f4f6f9" stroke="#8ba3c7" /><path d="M15 7h6M15 10h6M15 13h6M15 16h6" stroke="#6f86ab" strokeWidth="1.300" /><path d="M1 3.500L14 1v22L1 20.500z" fill="#2a5699" stroke="none" /><path d="M3.500 8l1.800 8L7.500 9.500 9.700 16l1.800-8" stroke="#fff" strokeWidth="1.600" /></> },
];

function Taskbar() {
  return (
    <footer className="flex h-[37px] shrink-0 items-stretch bg-[#020308] text-white">
      <button type="button" aria-label="Start" className="flex w-[45px] shrink-0 items-center justify-center">
        <Icon className="h-4 w-4"><path d="M0 2.300L7 1.300V7.600H0zM8 1.200L16 0v7.600H8zM0 8.500h7v6.300L0 13.800zM8 8.500h8V16l-8-1.200z" fill="#fff" stroke="none" /></Icon>
      </button>
      <label className="flex w-[322px] shrink-0 items-center bg-[#303131] pl-2">
        <Icon box="0 0 20 20" className="h-5 w-5"><circle cx="10" cy="10" r="8" stroke="#f2f2f2" strokeWidth="2.500" /></Icon>
        <input type="text" aria-label="Search" placeholder="Type here to search" className="ml-[6px] min-w-0 flex-1 bg-transparent text-[13px] outline-none placeholder:text-[#a0a0a0]" />
        <Icon className="mr-3 h-[18px] w-[14px]" box="0 0 14 18"><path d="M4.500 1.500h5v10h-5zM2.500 9v5h9V9M7 14v3M4 16.500h6" stroke="#999" strokeWidth="1.200" /></Icon>
      </label>
      {apps.map((app) => (
        <button key={app.label} type="button" aria-label={app.label} className={clsx('flex w-[46px] shrink-0 flex-col items-center', app.state === 'active' && 'bg-[#2d3336]')}>
          <span className="flex flex-1 items-center pt-[2px]"><Icon box="0 0 24 24" className="h-[22px] w-[22px]">{app.icon}</Icon></span>
          <span className={clsx('h-[2px]', app.state === 'active' && 'w-full bg-[#a9b6bc]', app.state === 'open' && 'w-[37px] bg-[#a9b6bc]')} />
        </button>
      ))}
      <div className="ml-auto flex items-center">
        <button type="button" aria-label="Show hidden icons"><Icon className="h-4 w-4"><path d="M3 11l5-5 5 5" stroke="#eee" strokeWidth="1.300" /></Icon></button>
        <Icon className="ml-[6px] h-4 w-4"><path d="M3.500 13Q0 12.500.5 10 1 8 3 8q1-4 5-4 3 0 4 3.500 4 .5 3.500 3.500-.5 2-3 2z" fill="#2a86d8" stroke="none" /></Icon>
        <Icon className="ml-[7px] h-4 w-4"><path d="M2 11Q4 4 14 3M4.500 12.500Q6 7 14 6M7.500 13.500Q8.500 10 14 9" stroke="#ddd" strokeWidth="1.300" /><circle cx="12" cy="13" r="1.500" fill="#fff" stroke="none" /></Icon>
        <Icon className="ml-[6px] h-4 w-4"><path d="M1 5.500h2.500L7 2.500v11l-3.500-3H1z" stroke="#eee" strokeWidth="1.200" /><path d="M9 5.500q2 2.500 0 5M11.500 4q3 4 0 8M14 2.500q3.500 5.500 0 11" stroke="#ddd" /></Icon>
        <div className="ml-[7px] w-[54px] text-center text-[11px] leading-[17px] whitespace-nowrap">
          <div>10:51 AM</div>
          <div>9/25/2020</div>
        </div>
        <button type="button" aria-label="Notifications" className="ml-[10px]">
          <svg viewBox="0 0 28 28" className="h-7 w-7" aria-hidden="true">
            <path d="M4 4h16v13h-9l-3 3v-3H4z" fill="#fff" />
            <path d="M6.500 7.500h11M6.500 10.500h11M6.500 13.500h7" stroke="#222" />
            <circle cx="19" cy="18" r="7" fill="#30363a" stroke="#8d9498" />
            <text x="19" y="22" textAnchor="middle" fontSize="12" fill="#fff">1</text>
          </svg>
        </button>
        <span className="mr-1 ml-[9px] h-[37px] w-px bg-[#4b4d52]" />
      </div>
    </footer>
  );
}

export default function App() {
  return (
    <div className="flex h-screen flex-col overflow-hidden font-['Open_Sans','Noto_Sans',sans-serif]">
      <TitleBar />
      <TabBar />
      <Ribbon />
      <div className="flex min-h-0 flex-1">
        <Sidebar />
        <Viewport />
      </div>
      <StatusBar />
      <Taskbar />
    </div>
  );
}
